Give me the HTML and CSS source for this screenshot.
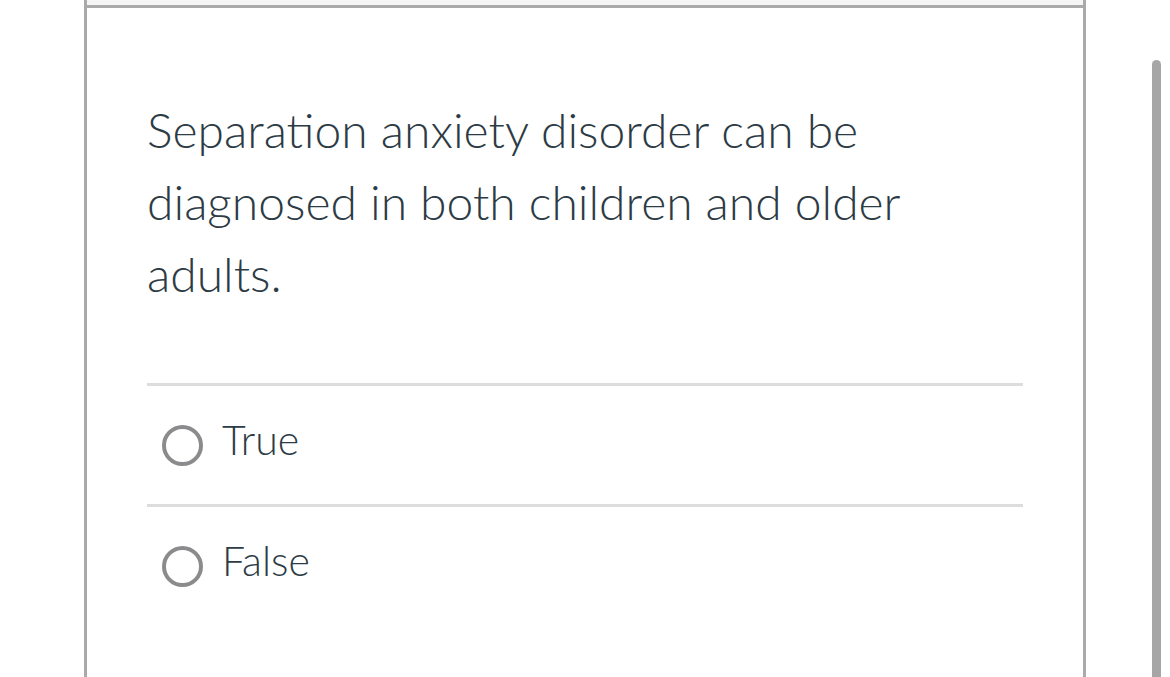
FILE: index.html
```html
<!DOCTYPE html>
<html>
<head>
<meta charset="utf-8">
<link rel="stylesheet" href="styles.css">
</head>
<body>
<div class="page">
  <div class="card">
    <div class="card-top"></div>
    <div class="card-body">
      <p class="question">Separation anxiety disorder can be diagnosed in both children and older adults.</p>
      <div class="answers">
        <label class="answer">
          <span class="radio"></span>
          <span class="answer-text">True</span>
        </label>
        <label class="answer">
          <span class="radio"></span>
          <span class="answer-text">False</span>
        </label>
      </div>
    </div>
  </div>
  <div class="scrollbar"></div>
</div>
</body>
</html>
```
FILE: styles.css
```css
html, body {
  margin: 0;
  padding: 0;
  background: #ffffff;
  height: 677px;
  overflow: hidden;
}
body {
  font-family: Lato, "Noto Sans", sans-serif;
  font-weight: 300;
  color: #2d3b45;
}
.page {
  position: relative;
  height: 677px;
  padding-left: 84px;
  overflow: hidden;
}
.card {
  width: 996px;
  height: 100%;
  border-left: 3px solid #aaaaaa;
  border-right: 3px solid #aaaaaa;
}
.card-top {
  height: 5px;
  background: #f5f5f5;
  border-bottom: 3px solid #aaaaaa;
}
.card-body {
  padding: 86px 60px 0 60px;
}
.question {
  margin: 0;
  font-size: 48px;
  line-height: 72px;
  padding-right: 100px;
  font-weight: 300;
}
.answers {
  margin-top: 73px;
}
.answer {
  display: flex;
  align-items: center;
  height: 118px;
  box-sizing: border-box;
  height: 121px;
  border-top: 3px solid #dddddd;
  padding-left: 15px;
}
.radio {
  width: 33px;
  height: 33px;
  border: 4px solid #8b8b8e;
  border-radius: 50%;
  flex: none;
}
.answer-text {
  margin-left: 19px;
  font-size: 41px;
  line-height: 50px;
  margin-top: -11px;
  font-weight: 300;
}
.scrollbar {
  position: absolute;
  left: 1152px;
  top: 60px;
  width: 9px;
  height: 617px;
  background: #a6a6a6;
  border-radius: 5px 5px 0 0;
}
```
